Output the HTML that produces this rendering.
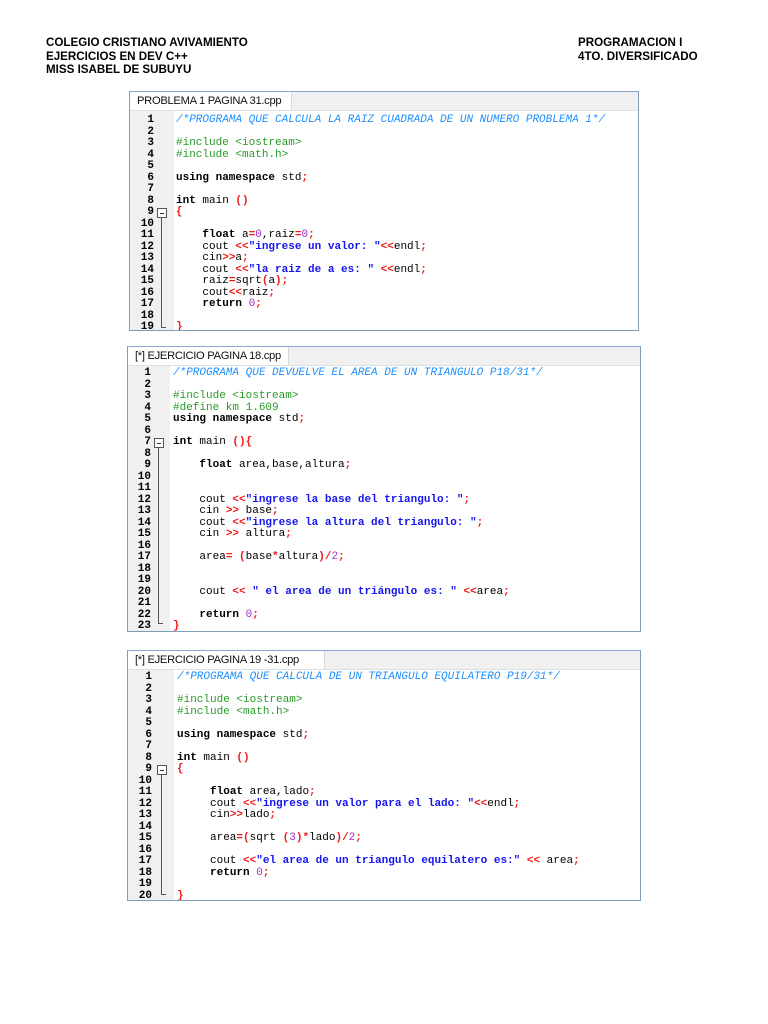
<!DOCTYPE html>
<html><head><meta charset="utf-8"><style>
body{margin:0;width:768px;height:1024px;background:#fff;position:relative;overflow:hidden;font-family:"Liberation Sans",sans-serif}
.h{position:absolute;font-weight:bold;font-size:11.6px;line-height:13.5px;color:#000;white-space:pre}
.panel{position:absolute;border:1px solid #7f9db9;border-top:1px solid #8aa6d6;background:#fff;box-sizing:border-box;overflow:hidden}
.tabbar{position:absolute;left:0;right:0;top:0;height:18px;background:#f0f0f0;border-bottom:1px solid #e0e0e0}
.tab{position:absolute;left:0;top:0;height:18px;background:#fff;border-right:1px solid #d8d8d8;font-size:11.2px;line-height:19px;padding-left:7px;box-sizing:border-box;color:#111;white-space:nowrap;letter-spacing:-0.3px}
.gut{position:absolute;left:0;top:19px;bottom:0;background:#f0f0f0}
.ln{position:absolute;font-family:"Liberation Mono",monospace;font-weight:bold;font-size:11px;line-height:11.5px;text-align:right;white-space:pre;color:#000}
.code{position:absolute;font-family:"Liberation Mono",monospace;font-size:11px;line-height:11.5px;white-space:pre;color:#000}
.c{color:#1e90ff;font-style:italic}
.p{color:#2a9a2a}
.s{color:#1515f0;font-weight:bold}
.n{color:#9b30c8}
.o{color:#f01818;font-weight:bold}
b{font-weight:bold}
.fold{position:absolute;width:10px;height:10px;border:1px solid #555;background:#fff;box-sizing:border-box}
.fold:after{content:"";position:absolute;left:2px;top:4px;width:4px;height:1px;background:#333}
.vl{position:absolute;width:1px;background:#555}
.hl{position:absolute;height:1px;width:5px;background:#555}
</style></head><body>
<div class="h" style="left:46px;top:36px">COLEGIO CRISTIANO AVIVAMIENTO
EJERCICIOS EN DEV C++
MISS ISABEL DE SUBUYU</div>
<div class="h" style="left:578px;top:36px">PROGRAMACION I
4TO. DIVERSIFICADO</div>

<!-- Panel 1 -->
<div class="panel" style="left:129px;top:91px;width:510px;height:240px">
<div class="tabbar"></div><div class="tab" style="width:162px">PROBLEMA 1 PAGINA 31.cpp</div>
<div class="gut" style="width:44px"></div>
<div class="ln" style="left:0;width:24px;top:23px">1
2
3
4
5
6
7
8
9
10
11
12
13
14
15
16
17
18
19</div>
<div class="fold" style="left:27px;top:116px"></div>
<div class="vl" style="left:31px;top:126px;height:110px"></div>
<div class="hl" style="left:31px;top:235px"></div>
<div class="code" style="left:46px;top:23px"><span class="c">/*PROGRAMA QUE CALCULA LA RAIZ CUADRADA DE UN NUMERO PROBLEMA 1*/</span>

<span class="p">#include &lt;iostream&gt;</span>
<span class="p">#include &lt;math.h&gt;</span>

<b>using namespace</b> std<span class="o">;</span>

<b>int</b> main <span class="o">()</span>
<span class="o">{</span>

    <b>float</b> a<span class="o">=</span><span class="n">0</span>,raiz<span class="o">=</span><span class="n">0</span><span class="o">;</span>
    cout <span class="o">&lt;&lt;</span><span class="s">"ingrese un valor: "</span><span class="o">&lt;&lt;</span>endl<span class="o">;</span>
    cin<span class="o">&gt;&gt;</span>a<span class="o">;</span>
    cout <span class="o">&lt;&lt;</span><span class="s">"la raiz de a es: "</span> <span class="o">&lt;&lt;</span>endl<span class="o">;</span>
    raiz<span class="o">=</span>sqrt<span class="o">(</span>a<span class="o">);</span>
    cout<span class="o">&lt;&lt;</span>raiz<span class="o">;</span>
    <b>return</b> <span class="n">0</span><span class="o">;</span>

<span class="o">}</span></div>
</div>

<!-- Panel 2 -->
<div class="panel" style="left:127px;top:346px;width:514px;height:286px">
<div class="tabbar"></div><div class="tab" style="width:161px">[*] EJERCICIO PAGINA 18.cpp</div>
<div class="gut" style="width:42px"></div>
<div class="ln" style="left:0;width:23px;top:21px">1
2
3
4
5
6
7
8
9
10
11
12
13
14
15
16
17
18
19
20
21
22
23</div>
<div class="fold" style="left:26px;top:91px"></div>
<div class="vl" style="left:30px;top:101px;height:176px"></div>
<div class="hl" style="left:30px;top:276px"></div>
<div class="code" style="left:45px;top:21px"><span class="c">/*PROGRAMA QUE DEVUELVE EL AREA DE UN TRIANGULO P18/31*/</span>

<span class="p">#include &lt;iostream&gt;</span>
<span class="p">#define km 1.609</span>
<b>using namespace</b> std<span class="o">;</span>

<b>int</b> main <span class="o">(){</span>

    <b>float</b> area,base,altura<span class="o">;</span>


    cout <span class="o">&lt;&lt;</span><span class="s">"ingrese la base del triangulo: "</span><span class="o">;</span>
    cin <span class="o">&gt;&gt;</span> base<span class="o">;</span>
    cout <span class="o">&lt;&lt;</span><span class="s">"ingrese la altura del triangulo: "</span><span class="o">;</span>
    cin <span class="o">&gt;&gt;</span> altura<span class="o">;</span>

    area<span class="o">=</span> <span class="o">(</span>base<span class="o">*</span>altura<span class="o">)/</span><span class="n">2</span><span class="o">;</span>


    cout <span class="o">&lt;&lt;</span> <span class="s">" el area de un triángulo es: "</span> <span class="o">&lt;&lt;</span>area<span class="o">;</span>

    <b>return</b> <span class="n">0</span><span class="o">;</span>
<span class="o">}</span></div>
</div>

<!-- Panel 3 -->
<div class="panel" style="left:127px;top:650px;width:514px;height:251px">
<div class="tabbar"></div><div class="tab" style="width:197px">[*] EJERCICIO PAGINA 19 -31.cpp</div>
<div class="gut" style="width:46px"></div>
<div class="ln" style="left:0;width:24px;top:21px">1
2
3
4
5
6
7
8
9
10
11
12
13
14
15
16
17
18
19
20</div>
<div class="fold" style="left:29px;top:114px"></div>
<div class="vl" style="left:33px;top:124px;height:120px"></div>
<div class="hl" style="left:33px;top:243px"></div>
<div class="code" style="left:49px;top:21px"><span class="c">/*PROGRAMA QUE CALCULA DE UN TRIANGULO EQUILATERO P19/31*/</span>

<span class="p">#include &lt;iostream&gt;</span>
<span class="p">#include &lt;math.h&gt;</span>

<b>using namespace</b> std<span class="o">;</span>

<b>int</b> main <span class="o">()</span>
<span class="o">{</span>

     <b>float</b> area,lado<span class="o">;</span>
     cout <span class="o">&lt;&lt;</span><span class="s">"ingrese un valor para el lado: "</span><span class="o">&lt;&lt;</span>endl<span class="o">;</span>
     cin<span class="o">&gt;&gt;</span>lado<span class="o">;</span>

     area<span class="o">=(</span>sqrt <span class="o">(</span><span class="n">3</span><span class="o">)*</span>lado<span class="o">)/</span><span class="n">2</span><span class="o">;</span>

     cout <span class="o">&lt;&lt;</span><span class="s">"el area de un triangulo equilatero es:"</span> <span class="o">&lt;&lt;</span> area<span class="o">;</span>
     <b>return</b> <span class="n">0</span><span class="o">;</span>

<span class="o">}</span></div>
</div>
</body></html>
